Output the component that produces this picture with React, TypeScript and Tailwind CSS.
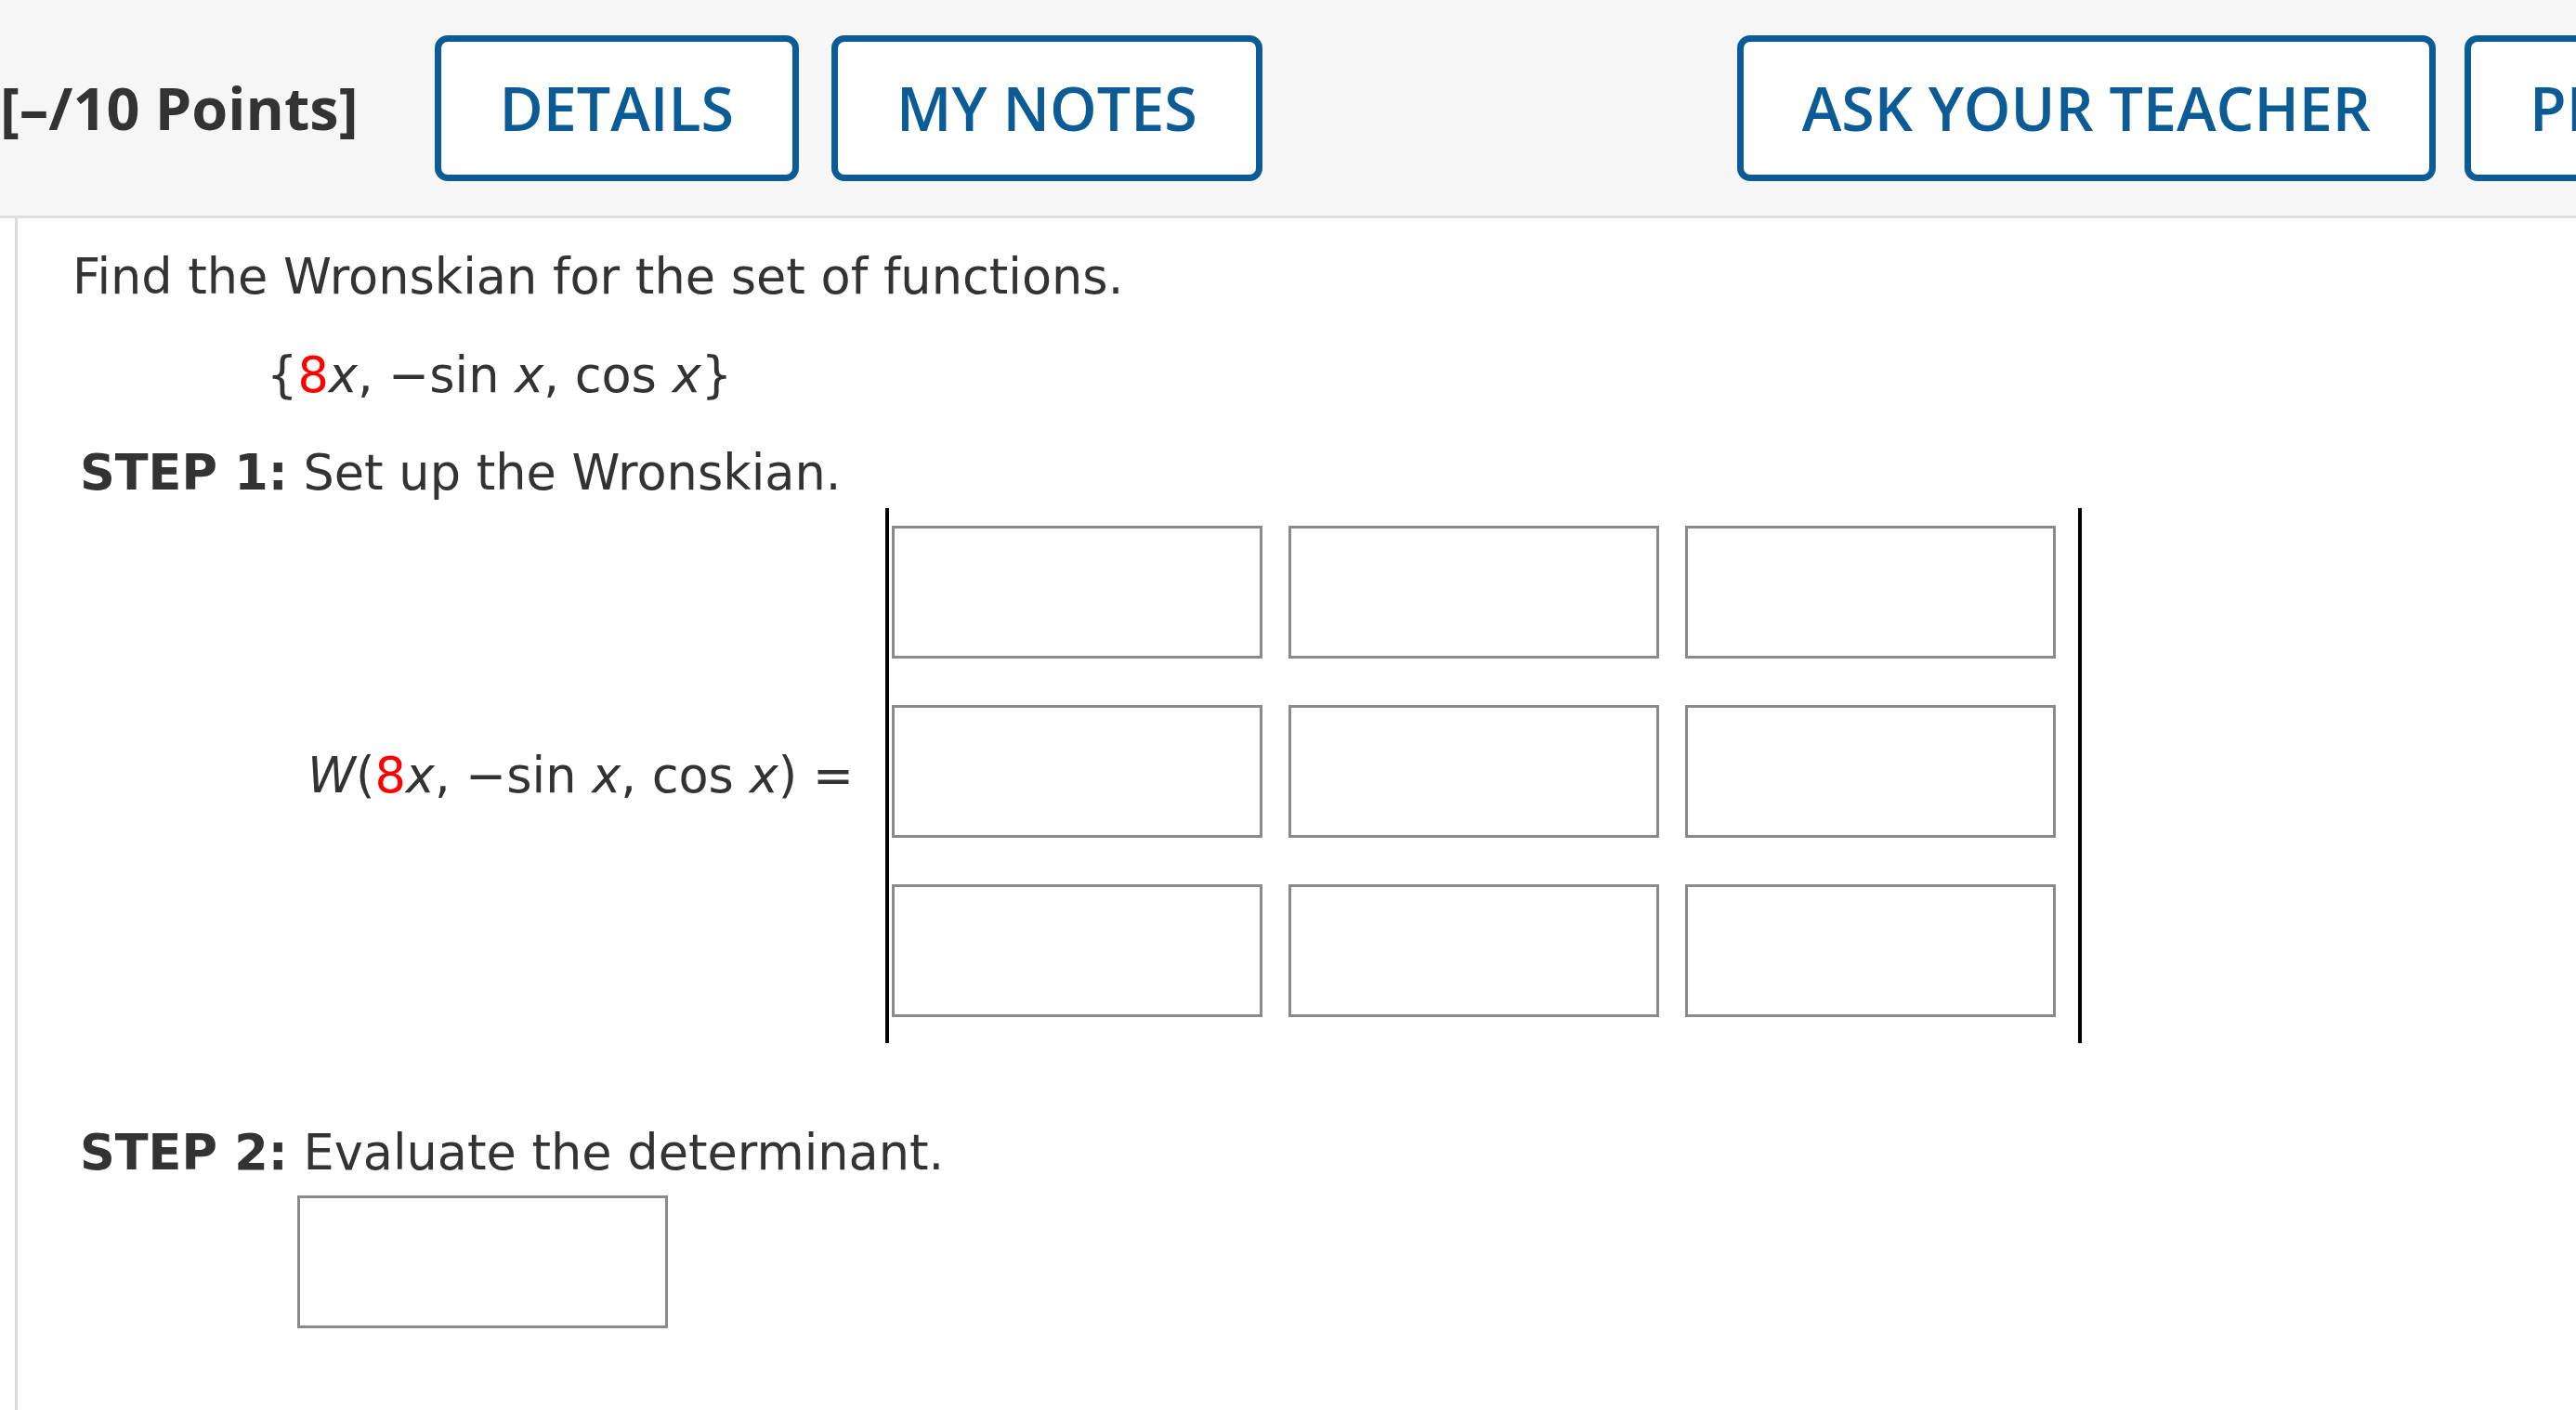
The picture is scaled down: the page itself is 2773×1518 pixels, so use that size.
export default function App() {
  const body = "font-['DejaVu_Sans','Verdana',sans-serif] text-[52.5px] text-[#333] leading-[72px]";
  const headerFont = "font-['Open_Sans','Liberation_Sans',sans-serif]";
  const btn = `${headerFont} shrink-0 h-[157px] px-[63px] border-[7px] border-[#0b5c96] rounded-[14px] bg-white text-[#0b5c96] text-[64.5px] font-semibold flex items-center whitespace-nowrap`;
  const cell = "w-[399px] h-[143px] border-[3px] border-[#8a8a8a] bg-white";

  return (
    <div className="w-[2773px] h-[1518px] overflow-hidden bg-white">
      {/* Header */}
      <div className="h-[235px] bg-[#f6f6f6] border-b-[3px] border-[#dedede] flex items-center overflow-hidden">
        <span className={`${headerFont} text-[63px] font-bold text-[#333] whitespace-nowrap`}>[–/10 Points]</span>
        <button className={`${btn} ml-[82px]`}>DETAILS</button>
        <button className={`${btn} ml-[35px]`}>MY NOTES</button>
        <button className={`${btn} ml-[511px]`}>ASK YOUR TEACHER</button>
        <button className={`${btn} ml-[31px]`}>PRACTICE ANOTHER</button>
      </div>

      {/* Question */}
      <div className="ml-[16px] border-l-[3px] border-[#dcdcdc] h-[1283px] pl-[59px] pt-[27px]">
        <p className={body}>Find the Wronskian for the set of functions.</p>
        <p className={`${body} mt-[34px] ml-[209px]`}>
          {"{"}
          <span className="text-[#f00]">8</span>
          <i>x</i>, −sin <i>x</i>, cos <i>x</i>
          {"}"}
        </p>

        <p className={`${body} mt-[33px] ml-[8px]`}>
          <b>STEP 1:</b> Set up the Wronskian.
        </p>

        <div className="mt-[2px] flex items-center">
          <span className={`${body} ml-[253px] whitespace-nowrap`}>
            <i>W</i>(<span className="text-[#f00]">8</span>
            <i>x</i>, −sin <i>x</i>, cos <i>x</i>) =
          </span>
          <div className="ml-[34px] border-l-[4px] border-r-[4px] border-black pl-[3px] pr-[24px] pt-[19px] pb-[28px]">
            <div className="grid grid-cols-3 gap-x-[28px] gap-y-[50px]">
              {Array.from({ length: 9 }).map((_, i) => (
                <div key={i} className={cell} />
              ))}
            </div>
          </div>
        </div>

        <p className={`${body} mt-[82px] ml-[8px]`}>
          <b>STEP 2:</b> Evaluate the determinant.
        </p>
        <div className={`${cell} mt-[10px] ml-[242px]`} />
      </div>
    </div>
  );
}
